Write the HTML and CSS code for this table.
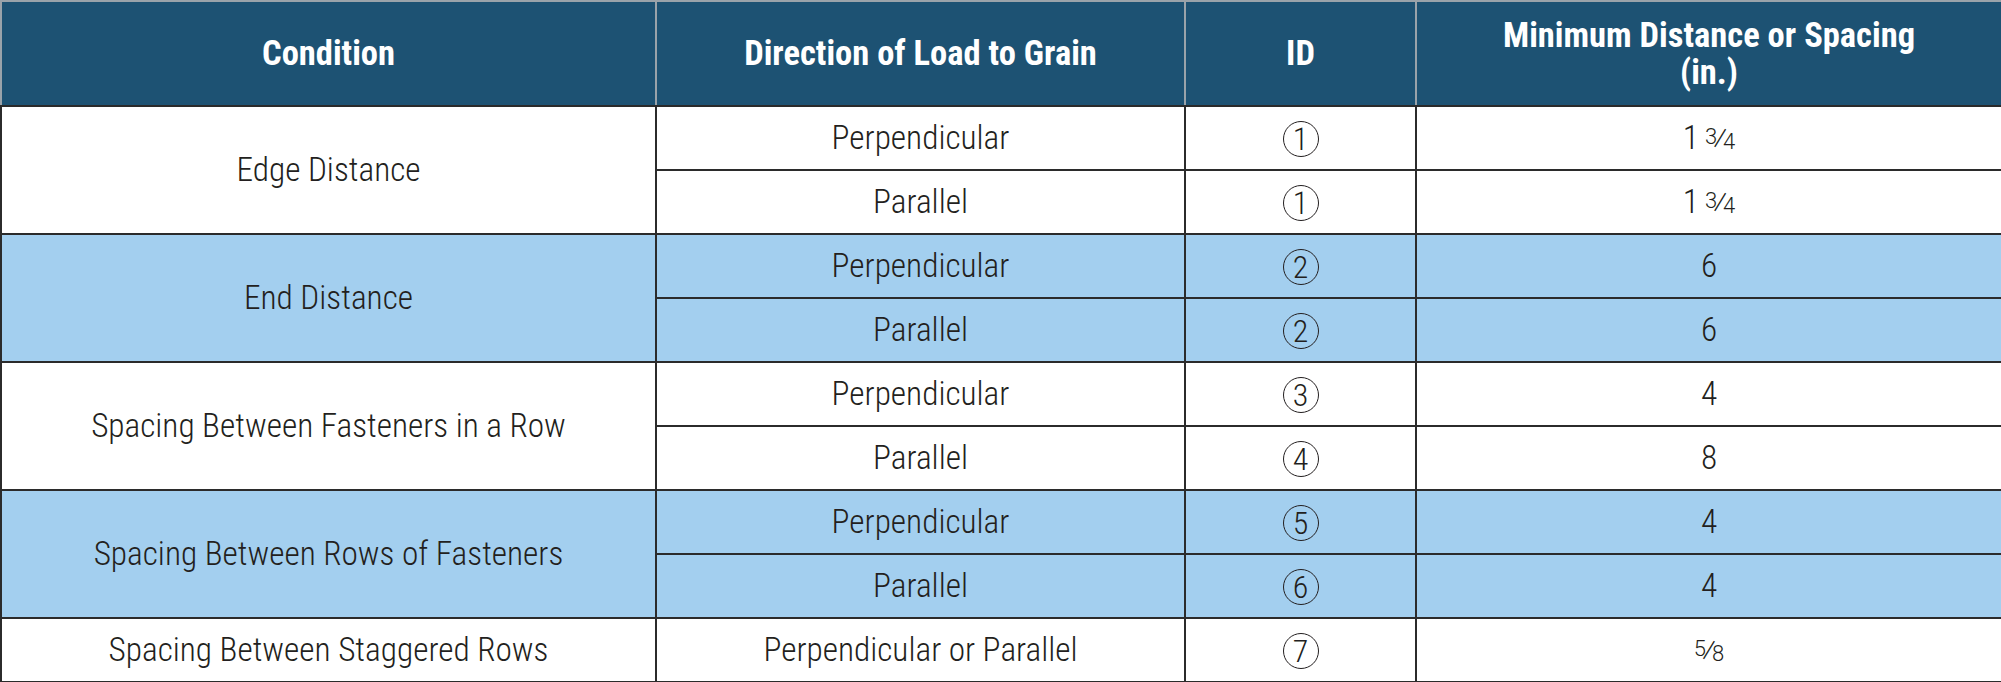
FILE: index.html
```html
<!DOCTYPE html>
<html lang="en">
<head>
<meta charset="utf-8">
<title>Minimum Distance and Spacing</title>
<link rel="stylesheet" href="styles.css">
</head>
<body>
<table class="spec">
  <colgroup>
    <col class="c-cond">
    <col class="c-dir">
    <col class="c-id">
    <col class="c-min">
  </colgroup>
  <thead>
    <tr>
      <th>Condition</th>
      <th>Direction of Load to Grain</th>
      <th>ID</th>
      <th>Minimum Distance or Spacing<br>(in.)</th>
    </tr>
  </thead>
  <tbody class="grp white">
    <tr>
      <td rowspan="2">Edge Distance</td>
      <td>Perpendicular</td>
      <td><span class="circ">1</span></td>
      <td>1<span class="frac"><span class="num">3</span><span class="sl">⁄</span><span class="den">4</span></span></td>
    </tr>
    <tr>
      <td>Parallel</td>
      <td><span class="circ">1</span></td>
      <td>1<span class="frac"><span class="num">3</span><span class="sl">⁄</span><span class="den">4</span></span></td>
    </tr>
  </tbody>
  <tbody class="grp blue">
    <tr>
      <td rowspan="2">End Distance</td>
      <td>Perpendicular</td>
      <td><span class="circ">2</span></td>
      <td>6</td>
    </tr>
    <tr>
      <td>Parallel</td>
      <td><span class="circ">2</span></td>
      <td>6</td>
    </tr>
  </tbody>
  <tbody class="grp white">
    <tr>
      <td rowspan="2">Spacing Between Fasteners in a Row</td>
      <td>Perpendicular</td>
      <td><span class="circ">3</span></td>
      <td>4</td>
    </tr>
    <tr>
      <td>Parallel</td>
      <td><span class="circ">4</span></td>
      <td>8</td>
    </tr>
  </tbody>
  <tbody class="grp blue">
    <tr>
      <td rowspan="2">Spacing Between Rows of Fasteners</td>
      <td>Perpendicular</td>
      <td><span class="circ">5</span></td>
      <td>4</td>
    </tr>
    <tr>
      <td>Parallel</td>
      <td><span class="circ">6</span></td>
      <td>4</td>
    </tr>
  </tbody>
  <tbody class="grp white">
    <tr>
      <td>Spacing Between Staggered Rows</td>
      <td>Perpendicular or Parallel</td>
      <td><span class="circ">7</span></td>
      <td><span class="frac solo"><span class="num">5</span><span class="sl">⁄</span><span class="den">8</span></span></td>
    </tr>
  </tbody>
</table>
</body>
</html>
```
FILE: styles.css
```css
html, body {
  margin: 0;
  padding: 0;
  background: #ffffff;
}

body {
  width: 2001px;
  height: 682px;
  overflow: hidden;
}

.spec {
  border-collapse: collapse;
  table-layout: fixed;
  width: 2001px;
  font-family: "Roboto Condensed", Roboto, "Liberation Sans", sans-serif;
  font-stretch: condensed;
  font-size: 33.3px;
  font-weight: 300;
  color: #231f20;
}

.c-cond { width: 655px; }
.c-dir  { width: 529px; }
.c-id   { width: 231px; }
.c-min  { width: 586px; }

.spec th {
  background: #1d5273;
  color: #ffffff;
  font-weight: 700;
  font-size: 34.5px;
  height: 103px;
  padding: 0;
  line-height: 37px;
  text-align: center;
  vertical-align: middle;
  border: 2px solid #9aa3aa;
  border-bottom-color: #2a2a2a;
}

.spec td {
  height: 62px;
  padding: 0;
  line-height: 1;
  text-align: center;
  vertical-align: middle;
  border: 2px solid #2b2b2b;
}

.spec tbody.blue td {
  background: #a3cfef;
}

.spec tbody.grp {
  border-top: 2px solid #3a3a3a;
}

.circ {
  display: inline-flex;
  align-items: center;
  justify-content: center;
  box-sizing: border-box;
  width: 36px;
  height: 36px;
  border: 1.3px solid #231f20;
  border-radius: 50%;
  font-size: 32px;
  line-height: 1;
  padding-top: 1px;
  vertical-align: middle;
}

.frac {
  display: inline-block;
  font-family: Roboto, "Liberation Sans", sans-serif;
  font-stretch: normal;
  font-weight: 300;
  font-size: 22px;
  margin-left: 6px;
  line-height: 1;
}

.frac.solo {
  margin-left: 0;
}

.frac .num {
  vertical-align: 5px;
}

.frac .sl {
  font-size: 31px;
  margin: 0 -4px;
}
```
